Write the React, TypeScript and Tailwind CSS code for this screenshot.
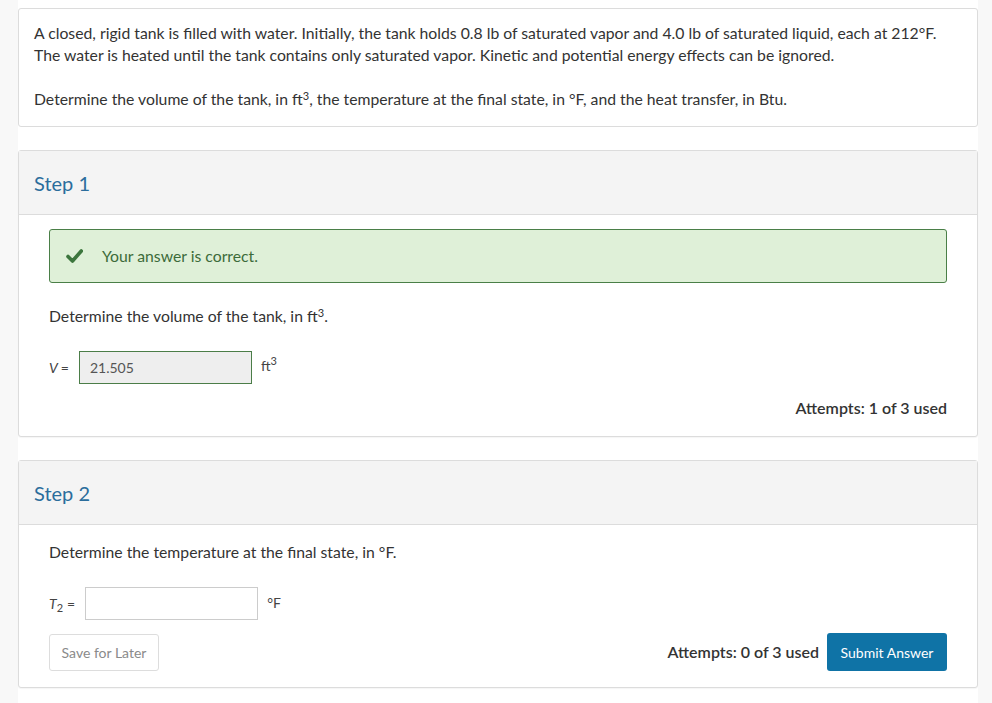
// ---- Layout pieces ----

function StepCard({ title, children }: { title: string; children: React.ReactNode }) {
  return (
    <section className="rounded-[3px] border border-[#dcdcdc] bg-white shadow-[0_1px_1px_rgba(0,0,0,0.04)]">
      <header className="flex h-[64px] items-center border-b border-[#dcdcdc] bg-[#f4f4f4] px-[15px]">
        <h2 className="text-[20px] leading-none text-[#2b6d9c]">{title}</h2>
      </header>
      <div className="px-[30px] pb-[16px] pt-[14px]">{children}</div>
    </section>
  );
}

function Ft3() {
  return (
    <span>
      ft<sup className="text-[11px]">3</sup>
    </span>
  );
}

function CheckMark() {
  return (
    <svg viewBox="0 0 16 14" className="h-[14px] w-[17px]" aria-hidden>
      <path d="M1.5 7.5 L6 12 L14.8 2" fill="none" stroke="#3c763d" strokeWidth="3.6" strokeLinecap="round" strokeLinejoin="round" />
    </svg>
  );
}

// ---- Page ----

export default function App() {
  return (
    <div
      className="min-h-[703px] bg-[#f8f8f8] text-[#333] antialiased"
      style={{ fontFamily: "Lato, 'Open Sans', sans-serif" }}
    >
      <div className="mx-[18px] mr-[14px] flex flex-col gap-[23px] bg-white pb-[15px] pt-[8px]">
        <div className="rounded-[3px] border border-[#dcdcdc] bg-white px-[15px] pb-[16px] pt-[13px] text-[15.75px] leading-[22px]">
          <p>
            A closed, rigid tank is filled with water. Initially, the tank holds 0.8 lb of saturated vapor and 4.0 lb
            of saturated liquid, each at 212°F. The water is heated until the tank contains only saturated vapor.
            Kinetic and potential energy effects can be ignored.
          </p>
          <p className="mt-[22px]">
            Determine the volume of the tank, in <Ft3 />, the temperature at the final state, in °F, and the heat
            transfer, in Btu.
          </p>
        </div>

        <StepCard title="Step 1">
          <div className="flex h-[54px] items-center rounded-[3px] border border-[#4a7f47] bg-[#dff0d8] pl-[16px] text-[15.75px] text-[#3c6b3a]">
            <CheckMark />
            <span className="ml-[19px]">Your answer is correct.</span>
          </div>
          <p className="mt-[22px] text-[15.75px] leading-[22px]">
            Determine the volume of the tank, in <Ft3 />.
          </p>
          <div className="mt-[24px] flex items-center text-[14px]">
            <span className="italic text-[#444]">V</span>
            <span className="ml-[3px] mr-[10px] text-[#444]">=</span>
            <div className="flex h-[33px] w-[173px] items-center border border-[#4b7d48] bg-[#eeeeee] px-[10px] text-[14px] text-[#555]">
              21.505
            </div>
            <span className="-mt-[5px] ml-[9px] text-[14px] text-[#444]">
              ft<sup className="text-[11px]">3</sup>
            </span>
          </div>
          <div className="mt-[12px] flex justify-end text-[16px] font-semibold text-[#333]">Attempts: 1 of 3 used</div>
        </StepCard>

        <StepCard title="Step 2">
          <p className="mt-[2px] text-[15.75px] leading-[22px]">Determine the temperature at the final state, in °F.</p>
          <div className="mt-[24px] flex items-center text-[14px] text-[#444]">
            <span className="italic">
              T<sub className="text-[11px] not-italic">2</sub>
            </span>
            <span className="ml-[4px] mr-[10px]">=</span>
            <div className="h-[33px] w-[173px] border border-[#cccccc] bg-white" />
            <span className="-mt-[3px] ml-[9px]">°F</span>
          </div>
          <div className="mt-[13px] flex items-center justify-between">
            <button className="h-[37px] w-[110px] rounded-[3px] border border-[#dddddd] bg-white text-[14px] text-[#8a8a8a]">
              Save for Later
            </button>
            <div className="flex items-center gap-[8px]">
              <span className="text-[16px] font-semibold text-[#333]">Attempts: 0 of 3 used</span>
              <button className="h-[38px] w-[120px] rounded-[3px] bg-[#0f73a6] text-[14px] text-white">
                Submit Answer
              </button>
            </div>
          </div>
        </StepCard>
      </div>
    </div>
  );
}
